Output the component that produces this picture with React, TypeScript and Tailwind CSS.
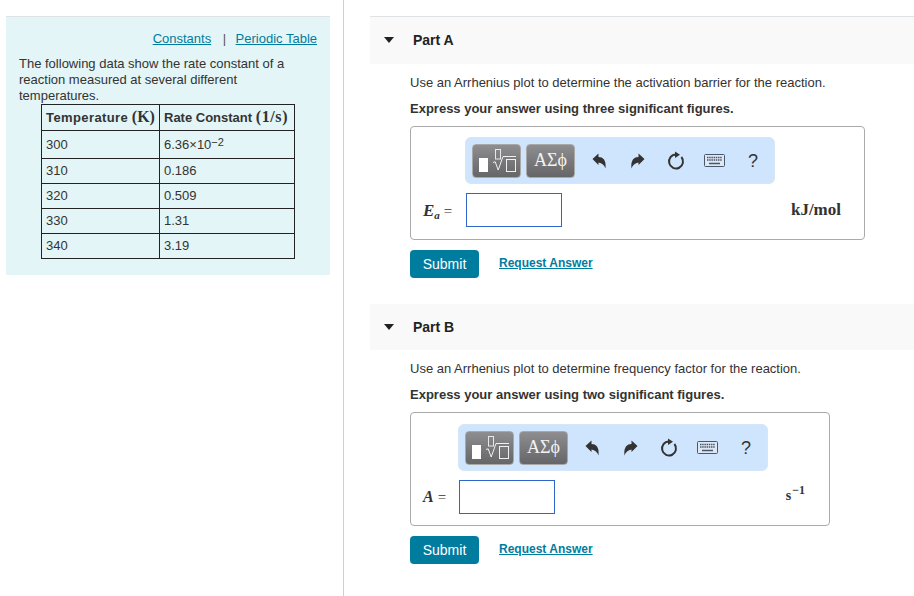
import type { ReactNode } from "react";

const rows = [
  ["300", null],
  ["310", "0.186"],
  ["320", "0.509"],
  ["330", "1.31"],
  ["340", "3.19"],
];

const serif = "font-['Liberation_Serif',serif]";

function RootIcon() {
  return (
    <svg width="49" height="34" viewBox="0 0 49 34" fill="none" className="-m-px shrink-0">
      <rect x="7" y="14" width="9" height="14" fill="#fff" />
      <rect x="23.500" y="5.500" width="5" height="9.500" stroke="#e8e8e8" />
      <path d="M21 18.500l2.200-.7 3 8.200L31 12.500h13" stroke="#f0f0f0" strokeWidth="1" />
      <rect x="34.500" y="15.500" width="9" height="12" stroke="#f0f0f0" />
    </svg>
  );
}

function Toolbar({ className }: { className: string }) {
  return (
    <div className={`flex h-[47px] w-[310px] items-center rounded-md border border-[#d5e6f7] bg-[#cfe4fd] pl-1.5 ${className}`}>
      <div className="flex h-[34px] w-[49px] items-center justify-center rounded border border-[#a8a8a8] bg-gradient-to-b from-[#8e8e90] to-[#666668]">
        <RootIcon />
      </div>
      <div className={`ml-[5px] flex h-[34px] w-[49px] items-center justify-center rounded border border-[#a8a8a8] bg-gradient-to-b from-[#8e8e90] to-[#666668] text-[18px] text-[#f2f2f2] ${serif}`}>
        ΑΣϕ
      </div>
      <svg className="ml-[17px]" width="16" height="16" viewBox="0 0 16 16" fill="#333">
        <path d="M.5 6 6.500.5V4c4.500 0 8 3 7 11.500-1-3.500-3.500-5.500-7-6V12z" />
      </svg>
      <svg className="ml-[21px]" width="16" height="16" viewBox="0 0 16 16" fill="#333">
        <path d="M15.500 6 9.500.5V4c-4.500 0-8 3-7 11.500 1-3.500 3.500-5.500 7-6V12z" />
      </svg>
      <svg className="ml-[22px]" width="18" height="20" viewBox="0 0 18 20" fill="none" stroke="#333" strokeWidth="2">
        <path d="M9 3.500a7 7 0 1 0 5.400 2.500" />
        <path d="M8 .5l5 3.300-5 3.200z" fill="#333" stroke="none" />
      </svg>
      <svg className="ml-[19px]" width="21" height="13" viewBox="0 0 21 13" fill="#dfe7f2" stroke="#46586e">
        <rect x="0.500" y="0.500" width="20" height="12" rx="1" />
        <path d="M3 3.500h15M3 6h15" strokeWidth="1.500" strokeDasharray="1.500 0.700" />
        <path d="M5 9.500h11" strokeWidth="1.500" />
      </svg>
      <span className="ml-[23px] text-lg text-[#333]">?</span>
    </div>
  );
}

function AnswerBox({ label, unit, width, toolbarClass, labelClass }: { label: ReactNode; unit: ReactNode; width: string; toolbarClass: string; labelClass: string }) {
  return (
    <div className={`flex h-[114px] flex-col rounded border border-[#aaa] pt-[10px] ${width}`}>
      <Toolbar className={toolbarClass} />
      <div className="mt-[9px] flex items-start">
        <div className={`ml-3 mt-[5px] text-[16px] text-[#333] ${serif} ${labelClass}`}>{label}</div>
        <div className="h-[34px] w-[96px] border border-[#2f66c9] bg-white" />
        <div className={`ml-auto text-[#333] ${serif}`}>{unit}</div>
      </div>
    </div>
  );
}

function Actions() {
  return (
    <div className="mt-[10px] flex items-start">
      <button className="h-[28px] w-[69px] rounded-sm bg-[#007c9f] text-sm text-white">Submit</button>
      <a className="ml-5 mt-[5px] text-xs font-bold text-[#007c9f] underline">Request Answer</a>
    </div>
  );
}

function PartHeader({ children, className }: { children: ReactNode; className: string }) {
  return (
    <div className={`flex items-center bg-[#f9f9f9] pl-[14px] text-sm font-bold text-[#222] ${className}`}>
      <div className="h-0 w-0 border-x-[5.500px] border-t-[6px] border-x-transparent border-t-[#222]" />
      <span className="ml-[19px]">{children}</span>
    </div>
  );
}

export default function App() {
  return (
    <div className="flex h-[596px] w-[914px] overflow-hidden bg-white font-['Liberation_Sans',Arial,sans-serif] text-[13px] text-[#333]">
      <aside className="w-[344px] shrink-0 border-r border-[#c9d0da] pl-[6px] pr-[13px] pt-4">
        <div className="h-[259px] border-t border-[#dfe3e6] bg-[#e3f5f6] pt-[13px]">
          <div className="flex justify-end pr-[13px] leading-[18px] text-[#007c9f]">
            <a className="underline">Constants</a>
            <span className="ml-[11.500px] mr-[9.500px] text-[#555]">|</span>
            <a className="underline">Periodic Table</a>
          </div>
          <p className="ml-[13px] mt-2 w-[285px] leading-4">
            The following data show the rate constant of a reaction measured at several different temperatures.
          </p>
          <table className="ml-[35px] w-[254px] table-fixed border-collapse border border-[#222]">
            <colgroup>
              <col className="w-[118px]" />
              <col />
            </colgroup>
            <thead>
              <tr className="h-[26px] leading-none">
                <th className="whitespace-nowrap border border-[#222] pb-[2px] pl-1 text-left font-bold">
                  <span className="tracking-[0.400px]">Temperature</span> <span className={`text-[16px] ${serif}`}>(K)</span>
                </th>
                <th className="whitespace-nowrap border border-[#222] pb-[2px] pl-1 text-left font-bold">
                  Rate Constant <span className={`text-[16px] tracking-[0.600px] ${serif}`}>(1/s)</span>
                </th>
              </tr>
            </thead>
            <tbody>
              {rows.map(([temp, rate], i) => (
                <tr key={temp} className={i === 0 ? "h-[28px]" : "h-[25px]"}>
                  <td className="border border-[#222] pl-1">{temp}</td>
                  <td className="border border-[#222] pl-1">
                    {rate ?? (
                      <>
                        6.36×10<sup className="top-[-3px] text-[11px] leading-none">−2</sup>
                      </>
                    )}
                  </td>
                </tr>
              ))}
            </tbody>
          </table>
        </div>
      </aside>
      <main className="flex-1 pl-[26px] pt-4">
        <PartHeader className="h-[48px] border-t border-[#dfe3e6] pb-px">Part A</PartHeader>
        <div className="pl-10">
          <p className="mt-[11px] leading-4">Use an Arrhenius plot to determine the activation barrier for the reaction.</p>
          <p className="mt-[10px] font-bold leading-4">Express your answer using three significant figures.</p>
          <div className="mt-[9px]">
            <AnswerBox
              width="w-[455px]"
              toolbarClass="ml-[54px]"
              labelClass="w-[43px]"
              label={<><i className="text-[17px] font-bold">E<sub className="text-[11px]">a</sub></i> <span className="text-[15px]">=</span></>}
              unit={<div className="mr-[23px] mt-[4px] text-[17px] font-bold">kJ/mol</div>}
            />
          </div>
          <Actions />
        </div>
        <PartHeader className="mt-[26px] h-[46px]">Part B</PartHeader>
        <div className="pl-10">
          <p className="mt-[11px] leading-4">Use an Arrhenius plot to determine frequency factor for the reaction.</p>
          <p className="mt-[10px] font-bold leading-4">Express your answer using two significant figures.</p>
          <div className="mt-[9px]">
            <AnswerBox
              width="w-[420px]"
              toolbarClass="ml-[47px] mt-px"
              labelClass="w-[36px]"
              label={<><i className="font-bold">A</i> <span className="text-[15px]">=</span></>}
              unit={<div className="mr-[24px] mt-[5px] text-[14px] font-bold">s<sup className="ml-px text-[12px]">−1</sup></div>}
            />
          </div>
          <Actions />
        </div>
      </main>
    </div>
  );
}
